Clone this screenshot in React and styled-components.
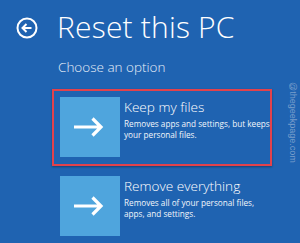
import styled, { createGlobalStyle } from "styled-components";

const GlobalStyle = createGlobalStyle`
  html, body {
    margin: 0;
    padding: 0;
    background: #1f63b1;
    font-family: "Open Sans", "Noto Sans", sans-serif;
  }
`;

const options = [
  {
    title: "Keep my files",
    desc: ["Removes apps and settings, but keeps", "your personal files."],
    selected: true,
  },
  {
    title: "Remove everything",
    desc: ["Removes all of your personal files,", "apps, and settings."],
    selected: false,
  },
];

const App = () => {
  return (
    <Page>
      <GlobalStyle />
      <Header>
        <BackButton aria-label="Back">
          <svg width="22" height="22" viewBox="0 0 22 22" fill="none">
            <circle cx="11" cy="11" r="9.5" stroke="#fff" strokeWidth="2" />
            <path
              d="M15.5 11H6.8M10.5 7 6.5 11l4 4"
              stroke="#fff"
              strokeWidth="2"
            />
          </svg>
        </BackButton>
        <Title>Reset this PC</Title>
      </Header>
      <Subtitle>Choose an option</Subtitle>
      <OptionList>
        {options.map((opt) => (
          <Option key={opt.title} selected={opt.selected}>
            <Tile>
              <svg width="30" height="20" viewBox="0 0 30 20" fill="none">
                <path
                  d="M0 10h27M18.5 1.5 27 10l-8.5 8.5"
                  stroke="#fff"
                  strokeWidth="3.2"
                />
              </svg>
            </Tile>
            <OptionText>
              <OptionTitle>{opt.title}</OptionTitle>
              <OptionDesc>
                {opt.desc.map((line) => (
                  <span key={line}>{line}</span>
                ))}
              </OptionDesc>
            </OptionText>
          </Option>
        ))}
      </OptionList>
      <Watermark>@thegeekpage.com</Watermark>
    </Page>
  );
};

export default App;

const Page = styled.div`
  position: relative;
  width: 300px;
  height: 243px;
  overflow: hidden;
  padding: 10px 0 0 16px;
  box-sizing: border-box;
  background: #1f63b1;
  color: #fff;
`;

const Header = styled.div`
  display: flex;
  align-items: center;
  gap: 19px;
`;

const BackButton = styled.div`
  display: flex;
  width: 22px;
  height: 22px;
  margin-top: 1px;
`;

const Title = styled.h1`
  margin: 0;
  font-size: 30px;
  font-weight: 300;
  line-height: 34px;
  letter-spacing: 0.2px;
`;

const Subtitle = styled.div`
  margin: 15px 0 0 42px;
  font-size: 13.5px;
  font-weight: 300;
  line-height: 16px;
  color: #e6eef8;
`;

const OptionList = styled.div`
  display: flex;
  flex-direction: column;
  gap: 2px;
  margin: 14px 0 0 36px;
  width: 220px;
`;

const Option = styled.div`
  display: flex;
  align-items: flex-start;
  gap: 3px;
  padding: 6px 6px 7px;
  border: 2px solid ${(p) => (p.selected ? "#e2424c" : "transparent")};
  box-shadow: ${(p) => (p.selected ? "0 1px 2px rgba(0, 0, 0, 0.35)" : "none")};
`;

const Tile = styled.div`
  flex: none;
  display: flex;
  align-items: center;
  justify-content: center;
  width: 60px;
  height: 60px;
  background: #4fa5dd;
  padding-right: 2px;
  box-sizing: border-box;
`;

const OptionText = styled.div`
  flex: 1;
  display: flex;
  flex-direction: column;
  padding-left: 1px;
`;

const OptionTitle = styled.div`
  font-size: 13.6px;
  font-weight: 300;
  line-height: 17px;
  margin-top: 1px;
  white-space: nowrap;
`;

const OptionDesc = styled.div`
  display: flex;
  flex-direction: column;
  margin-top: 3px;
  font-size: 8.2px;
  line-height: 11px;
  white-space: nowrap;
  color: #f2f6fb;
`;

const Watermark = styled.div`
  position: absolute;
  left: 297px;
  top: 82px;
  transform-origin: 0 0;
  transform: rotate(90deg);
  font-family: "Liberation Sans", Arial, sans-serif;
  font-size: 9px;
  line-height: 9px;
  white-space: nowrap;
  color: rgba(200, 210, 225, 0.55);
`;
